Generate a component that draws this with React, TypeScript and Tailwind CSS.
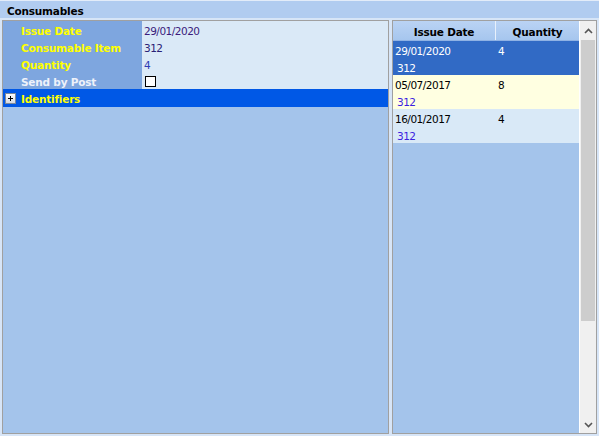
import React from 'react';

const fieldRows = [
  { label: 'Issue Date', value: '29/01/2020', labelColor: 'text-[#ffff00]', valueColor: 'text-[#3b1c7c]' },
  { label: 'Consumable Item', value: '312', labelColor: 'text-[#ffff00]', valueColor: 'text-[#2a2275]' },
  { label: 'Quantity', value: '4', labelColor: 'text-[#ffff00]', valueColor: 'text-[#2e3db5]' },
];

const gridRows = [
  { date: '29/01/2020', qty: '4', item: '312', row: 'bg-[#316ac5] text-white', itemColor: 'text-white' },
  { date: '05/07/2017', qty: '8', item: '312', row: 'bg-[#ffffe1] text-black', itemColor: 'text-[#3d1fe0]' },
  { date: '16/01/2017', qty: '4', item: '312', row: 'bg-[#d9e9f7] text-black', itemColor: 'text-[#3d1fe0]' },
];

function ChevronUp() {
  return (
    <svg width="9" height="6" viewBox="0 0 9 6">
      <path d="M1 5 L4.5 1.5 L8 5" fill="none" stroke="#555" strokeWidth="1.6" />
    </svg>
  );
}

function ChevronDown() {
  return (
    <svg width="9" height="6" viewBox="0 0 9 6">
      <path d="M1 1 L4.5 4.5 L8 1" fill="none" stroke="#555" strokeWidth="1.6" />
    </svg>
  );
}

function ExpandBox() {
  return (
    <svg width="11" height="11" viewBox="0 0 11 11">
      <defs>
        <linearGradient id="eb" x1="0" y1="0" x2="0" y2="1">
          <stop offset="0" stopColor="#ffffff" />
          <stop offset="1" stopColor="#d4d8e0" />
        </linearGradient>
      </defs>
      <rect x="0.5" y="0.5" width="10" height="10" fill="url(#eb)" stroke="#7f8a99" />
      <path d="M3 5.5 H8 M5.5 3 V8" stroke="#000" strokeWidth="1" />
    </svg>
  );
}

export default function App() {
  return (
    <div
      className="w-[599px] h-[436px] bg-[#d7e5f7] flex flex-col text-[10.5px] tracking-[-0.5px] leading-none"
      style={{ fontFamily: '"DejaVu Sans", Tahoma, sans-serif' }}
    >
      {/* Title bar */}
      <div className="h-[18px] bg-[#b1ccf0] border-t border-[#e3ecf9] pl-[7px] pt-[3px] flex items-center font-bold tracking-[-0.2px] text-black">
        Consumables
      </div>

      <div className="flex-1 flex gap-[3px] px-[2px] pt-[2px] pb-[2px] min-h-0">
        {/* Detail panel */}
        <div className="w-[387px] border border-[#a0a0a0] bg-[#a4c4eb] flex flex-col">
          {fieldRows.map((r) => (
            <div key={r.label} className="flex h-[17px]">
              <div
                className={`w-[139px] bg-[#7ea6df] pl-[18px] pt-[3px] flex items-center font-bold tracking-[-0.2px] ${r.labelColor}`}
              >
                {r.label}
              </div>
              <div className={`flex-1 bg-[#dae9f7] pl-[2px] pt-[3px] flex items-center ${r.valueColor}`}>
                {r.value}
              </div>
            </div>
          ))}
          <div className="flex h-[17px]">
            <div className="w-[139px] bg-[#7ea6df] pl-[18px] pt-[3px] flex items-center font-bold tracking-[-0.2px] text-[#eef2fa]">
              Send by Post
            </div>
            <div className="flex-1 bg-[#dae9f7] pl-[3px] pt-[2px] flex items-center">
              <div className="w-[11px] h-[11px] bg-white border border-black" />
            </div>
          </div>
          <div className="h-[18px] bg-[#0058e6] flex items-center pl-[2px]">
            <ExpandBox />
            <span className="ml-[5px] pt-[3px] font-bold tracking-[-0.2px] text-[#ffff00]">Identifiers</span>
          </div>
        </div>

        {/* History grid */}
        <div className="flex-1 border border-[#a0a0a0] bg-[#a4c4eb] flex">
          <div className="flex-1 flex flex-col">
            <div className="h-[20px] flex bg-gradient-to-b from-[#bad3f4] to-[#a6c6ee] border-b border-[#8fb2e4] font-bold tracking-[-0.2px] text-black">
              <div className="w-[103px] pt-[3px] flex items-center justify-center border-r border-[#e8f0fb]">
                Issue Date
              </div>
              <div className="flex-1 pt-[3px] flex items-center justify-center">Quantity</div>
            </div>
            {gridRows.map((g) => (
              <div key={g.date} className={`h-[34px] flex flex-col ${g.row}`}>
                <div className="h-[17px] pt-[3px] flex items-center">
                  <span className="w-[105px] pl-[2px]">{g.date}</span>
                  <span>{g.qty}</span>
                </div>
                <div className={`h-[17px] pt-[3px] flex items-center pl-[4px] ${g.itemColor}`}>{g.item}</div>
              </div>
            ))}
          </div>
          {/* Scrollbar */}
          <div className="w-[17px] bg-[#f0f0f0] border-l border-white flex flex-col">
            <div className="h-[19px] flex items-center justify-center">
              <ChevronUp />
            </div>
            <div className="h-[281px] mx-[1px] bg-[#cdcdcd]" />
            <div className="flex-1" />
            <div className="h-[17px] flex items-center justify-center">
              <ChevronDown />
            </div>
          </div>
        </div>
      </div>
    </div>
  );
}
